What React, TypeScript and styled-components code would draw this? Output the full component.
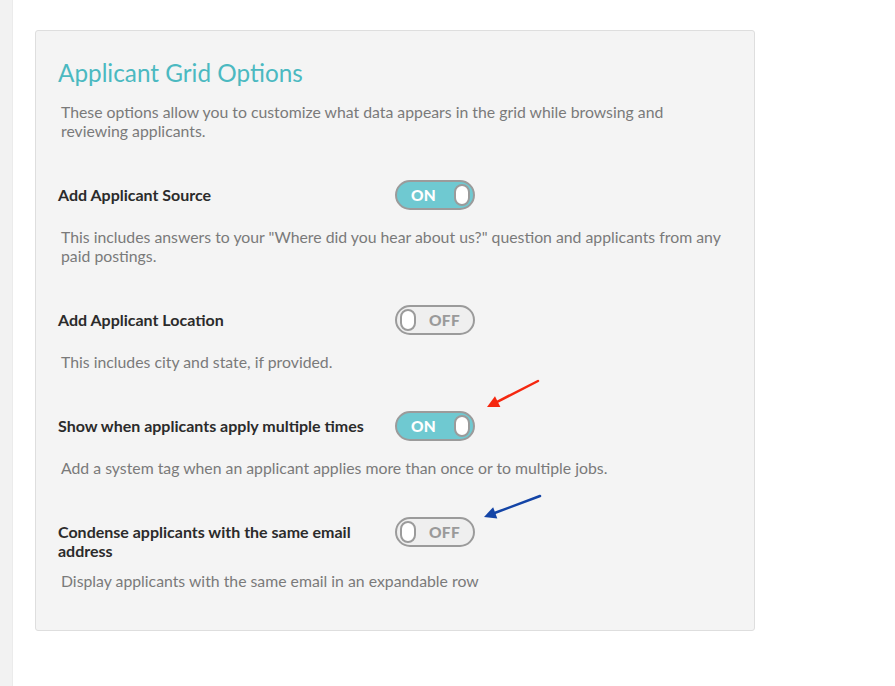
import React from "react";
import styled, { createGlobalStyle } from "styled-components";

const GlobalStyle = createGlobalStyle`
  html, body {
    margin: 0;
    padding: 0;
    background: #ffffff;
  }
  body {
    font-family: Lato, "Open Sans", sans-serif;
  }
`;

const Page = styled.div`
  display: flex;
  min-height: 686px;
  position: relative;
`;

const SideStrip = styled.div`
  width: 12px;
  flex-shrink: 0;
  background: #f2f2f2;
  border-right: 1px solid #ebebeb;
`;

const Content = styled.div`
  padding: 30px 0 0 22px;
`;

const Panel = styled.section`
  width: 720px;
  box-sizing: border-box;
  background: #f4f4f4;
  border: 1px solid #dedede;
  border-radius: 3px;
  padding: 27px 22px 40px 22px;
`;

const Title = styled.h2`
  margin: 0;
  font-size: 24.3px;
  font-weight: 400;
  line-height: 30px;
  color: #4bb9c1;
`;

const Description = styled.p<{ $gap?: number }>`
  margin: ${(p) => p.$gap ?? 17}px 0 0 3px;
  font-size: 15.8px;
  line-height: 19px;
  color: #7a7a7a;
`;

const Option = styled.div`
  margin-top: 40px;
`;

const Row = styled.div`
  display: flex;
  align-items: flex-start;
`;

const Label = styled.div`
  width: 320px;
  margin-right: 17px;
  padding-top: 5px;
  font-size: 16px;
  line-height: 19px;
  font-weight: 700;
  color: #2b2b2b;
`;

const Switch = styled.div<{ $on: boolean }>`
  width: 80px;
  height: 30px;
  box-sizing: border-box;
  border: 2px solid #9b9b9b;
  border-radius: 15px;
  background: ${(p) => (p.$on ? "#6fc9d1" : "#efefef")};
  display: flex;
  align-items: center;
  flex-direction: ${(p) => (p.$on ? "row" : "row-reverse")};
  justify-content: space-between;
  padding: 0 ${(p) => (p.$on ? 3 : 13)}px 0 ${(p) => (p.$on ? 14 : 3)}px;
  flex-shrink: 0;
`;

const SwitchText = styled.span<{ $on: boolean }>`
  font-size: 15.5px;
  font-weight: 900;
  letter-spacing: 0.3px;
  color: ${(p) => (p.$on ? "#ffffff" : "#9a9a9a")};
`;

const Knob = styled.span`
  width: 16px;
  height: 22px;
  box-sizing: border-box;
  border: 2px solid #9b9b9b;
  border-radius: 8px;
  background: #ffffff;
`;

const Arrow = styled.svg<{ $x: number; $y: number }>`
  position: absolute;
  left: ${(p) => p.$x}px;
  top: ${(p) => p.$y}px;
  overflow: visible;
`;

type OptionData = {
  label: string;
  on: boolean;
  text: string;
  gap?: number;
};

const options: OptionData[] = [
  {
    label: "Add Applicant Source",
    on: true,
    text: 'This includes answers to your "Where did you hear about us?" question and applicants from any paid postings.',
  },
  {
    label: "Add Applicant Location",
    on: false,
    text: "This includes city and state, if provided.",
  },
  {
    label: "Show when applicants apply multiple times",
    on: true,
    text: "Add a system tag when an applicant applies more than once or to multiple jobs.",
  },
  {
    label: "Condense applicants with the same email address",
    on: false,
    text: "Display applicants with the same email in an expandable row",
    gap: 11,
  },
];

function Toggle({ on }: { on: boolean }) {
  return (
    <Switch $on={on}>
      <SwitchText $on={on}>{on ? "ON" : "OFF"}</SwitchText>
      <Knob />
    </Switch>
  );
}

function PointerArrow({ x, y, color, dx, dy }: { x: number; y: number; color: string; dx: number; dy: number }) {
  const len = Math.sqrt(dx * dx + dy * dy);
  const ux = dx / len;
  const uy = dy / len;
  const hx = dx - ux * 12;
  const hy = dy - uy * 12;
  const px = -uy * 6;
  const py = ux * 6;
  return (
    <Arrow $x={x} $y={y} width={Math.abs(dx)} height={Math.abs(dy)}>
      <line x1={0} y1={0} x2={hx} y2={hy} stroke={color} strokeWidth={2.5} strokeLinecap="round" />
      <polygon points={`${dx},${dy} ${hx + px},${hy + py} ${hx - px},${hy - py}`} fill={color} />
    </Arrow>
  );
}

export default function App() {
  return (
    <>
      <GlobalStyle />
      <Page>
        <SideStrip />
        <Content>
          <Panel>
            <Title>Applicant Grid Options</Title>
            <Description $gap={14}>
              These options allow you to customize what data appears in the grid while browsing and
              reviewing applicants.
            </Description>
            {options.map((o) => (
              <Option key={o.label}>
                <Row>
                  <Label>{o.label}</Label>
                  <Toggle on={o.on} />
                </Row>
                <Description $gap={o.gap}>{o.text}</Description>
              </Option>
            ))}
          </Panel>
        </Content>
        <PointerArrow x={538} y={381} dx={-51} dy={26} color="#f5270f" />
        <PointerArrow x={540} y={496} dx={-56} dy={21} color="#1344a6" />
      </Page>
    </>
  );
}
